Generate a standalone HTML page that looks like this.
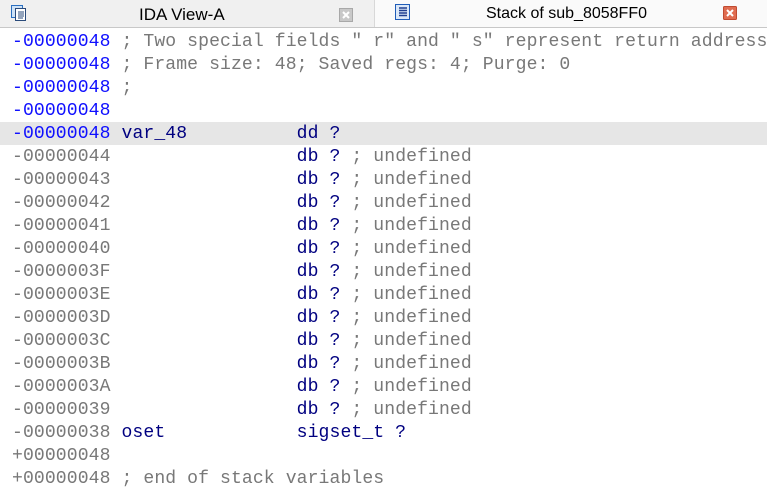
<!DOCTYPE html>
<html><head><style>
body{margin:0;width:767px;height:495px;overflow:hidden;background:#fff;position:relative}
.tabs{position:absolute;left:0;top:0;width:767px;height:28px;border-bottom:1px solid #c8c8c8;box-sizing:border-box;font-family:"Liberation Sans",sans-serif;font-size:16px;color:#000}
.t1{position:absolute;left:0;top:0;width:374px;height:27px;background:#f0f0f0;border-right:1px solid #d8d8d8}
.t2{position:absolute;left:375px;top:0;width:392px;height:27px;background:#fafafa}
.lbl{position:absolute;top:5px}
.code{position:absolute;left:12px;top:31px;font-family:"Liberation Mono",monospace;font-size:18.1px;letter-spacing:0.09px;line-height:23px;white-space:pre;color:#787878}
.row{height:23px}
.hl{position:absolute;left:0;top:122px;width:767px;height:23px;background:#e6e6e6}
.b{color:#1010ff}.n{color:#000080}
</style></head><body>
<div class="tabs">
<div class="t1">
<svg style="position:absolute;left:11px;top:5px" width="16" height="16"><rect x="0.5" y="0.5" width="11" height="12" fill="#cfe3f7" stroke="#2a6fc0"/><rect x="4.5" y="3.5" width="10" height="12" fill="#fff" stroke="#2a4a7a"/><path d="M7 7h6M7 9h6M7 11h6M7 13h5" stroke="#2a4a7a"/></svg>
<span class="lbl" style="left:139px;font-size:17px">IDA View-A</span>
<svg style="position:absolute;left:339px;top:8px" width="14" height="14"><rect x="0.5" y="0.5" width="13" height="13" fill="#c8c8c8" stroke="#a8a8a8"/><path d="M4 4l6 6M10 4l-6 6" stroke="#fff" stroke-width="2"/></svg>
</div>
<div class="t2">
<svg style="position:absolute;left:20px;top:4px" width="16" height="16"><rect x="0.5" y="0.5" width="14" height="15" fill="#dbe8f8" stroke="#1f5cb8"/><path d="M4 4h8M4 6.5h8M4 9h8M4 11.5h8" stroke="#1f3f90" stroke-width="1.5"/></svg>
<span class="lbl" style="left:111px">Stack of sub_8058FF0</span>
<svg style="position:absolute;left:348px;top:6px" width="14" height="14"><rect x="0.5" y="0.5" width="13" height="13" rx="1" fill="#e06c50" stroke="#c04a30"/><path d="M4 4l6 6M10 4l-6 6" stroke="#fff" stroke-width="2"/></svg>
</div>
</div>
<div class="hl"></div>
<div class="code"><div class="row"><span class="b">-00000048</span> ; Two special fields " r" and " s" represent return address</div><div class="row"><span class="b">-00000048</span> ; Frame size: 48; Saved regs: 4; Purge: 0</div><div class="row"><span class="b">-00000048</span> ;</div><div class="row"><span class="b">-00000048</span></div><div class="row"><span class="b">-00000048</span> <span class="n">var_48          dd ?</span></div><div class="row">-00000044                 <span class="n">db ?</span> ; undefined</div><div class="row">-00000043                 <span class="n">db ?</span> ; undefined</div><div class="row">-00000042                 <span class="n">db ?</span> ; undefined</div><div class="row">-00000041                 <span class="n">db ?</span> ; undefined</div><div class="row">-00000040                 <span class="n">db ?</span> ; undefined</div><div class="row">-0000003F                 <span class="n">db ?</span> ; undefined</div><div class="row">-0000003E                 <span class="n">db ?</span> ; undefined</div><div class="row">-0000003D                 <span class="n">db ?</span> ; undefined</div><div class="row">-0000003C                 <span class="n">db ?</span> ; undefined</div><div class="row">-0000003B                 <span class="n">db ?</span> ; undefined</div><div class="row">-0000003A                 <span class="n">db ?</span> ; undefined</div><div class="row">-00000039                 <span class="n">db ?</span> ; undefined</div><div class="row">-00000038 <span class="n">oset            sigset_t ?</span></div><div class="row">+00000048</div><div class="row">+00000048 ; end of stack variables</div></div>
</body></html>
